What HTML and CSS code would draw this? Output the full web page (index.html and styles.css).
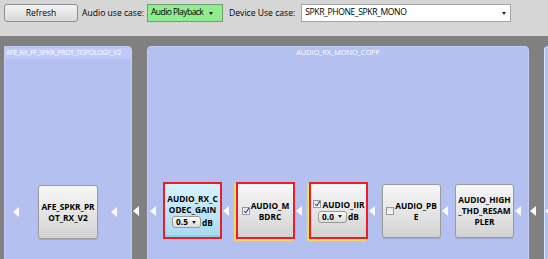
FILE: index.html
```html
<!DOCTYPE html>
<html>
  <head>
    <meta charset="UTF-8" />
    <title>Topology viewer</title>
    <link rel="stylesheet" href="styles.css">
  </head>
  <body>
    <div class="toolbar">
      <button class="btn">Refresh</button>
      <span class="lbl">Audio use case:</span>
      <div class="combo combo-green">Audio Playback<span class="caret"></span></div>
      <span class="lbl lbl-device">Device Use case:</span>
      <div class="combo combo-wide">SPKR_PHONE_SPKR_MONO<span class="caret"></span></div>
    </div>

    <div class="canvas">
      <div class="panel panel-afe">
        <div class="panel-title title-afe">AFE_RX_FF_SPKR_PROT_TOPOLOGY_V2</div>
        <div class="chain">
          <span class="arrow arrow-afe-in"></span>
          <div class="module module-afe">
            <div class="name">AFE_SPKR_PR<br />OT_RX_V2</div>
          </div>
          <span class="arrow arrow-afe-out"></span>
        </div>
      </div>

      <div class="link"><span class="arrow"></span></div>

      <div class="panel panel-copp">
        <div class="panel-title">AUDIO_RX_MONO_COPP</div>
        <div class="chain chain-copp">
          <span class="arrow"></span>

          <div class="module module-gain selected">
            <div class="stack">
              <div class="name">AUDIO_RX_C<br />ODEC_GAIN</div>
              <div class="value">
                <span class="mini-combo">0.5<span class="caret"></span></span>dB
              </div>
            </div>
          </div>
          <span class="arrow"></span>

          <div class="module selected glow">
            <span class="check checked"></span>
            <div class="name">AUDIO_M<br />BDRC</div>
          </div>
          <span class="arrow"></span>

          <div class="module selected glow">
            <div class="stack">
              <div class="row"><span class="check checked"></span><span class="name">AUDIO_IIR</span></div>
              <div class="value">
                <span class="mini-combo">0.0<span class="caret"></span></span>dB
              </div>
            </div>
          </div>
          <span class="arrow"></span>

          <div class="module">
            <span class="check"></span>
            <div class="name">AUDIO_PB<br />E</div>
          </div>
          <span class="arrow"></span>

          <div class="module">
            <div class="name">AUDIO_HIGH<br />_THD_RESAM<br />PLER</div>
          </div>
          <span class="arrow"></span>
        </div>
      </div>

      <div class="link"><span class="arrow"></span></div>

      <div class="panel panel-next">
        <div class="panel-title"></div>
        <div class="chain chain-next"><span class="arrow"></span></div>
      </div>
    </div>
  </body>
</html>
```

FILE: styles.css
```css
body {
  margin: 0;
  width: 548px;
  height: 259px;
  overflow: hidden;
  background: #808080;
  font-family: "Open Sans", "Noto Sans", sans-serif;
  color: #000;
}

/* top bar */
.toolbar {
  display: flex;
  align-items: center;
  height: 36px;
  box-sizing: border-box;
  padding: 0 4px 10px 4px;
  background: #d6d6d6;
  font-size: 8.6px;
}
.btn {
  width: 74px;
  height: 18px;
  margin: 0;
  padding: 0;
  border: 1px solid #8f8f8f;
  border-radius: 3px;
  background: linear-gradient(#f4f4f4, #e6e6e6 50%, #d8d8d8);
  font: inherit;
  color: #000;
}
.lbl {
  margin-left: 4px;
}
.lbl-device {
  margin-left: 6px;
}
.combo {
  position: relative;
  height: 18px;
  box-sizing: border-box;
  margin-left: 3px;
  padding: 0 0 0 3px;
  border: 1px solid #8a8a8a;
  line-height: 15px;
  letter-spacing: -0.4px;
}
.combo-green {
  width: 76px;
  background: #90ec90;
  border-color: #6fa06f;
  letter-spacing: -0.6px;
}
.combo-wide {
  width: 210px;
  margin-left: 6px;
  background: #fff;
  border-color: #a4a4a4;
}
.combo .caret {
  position: absolute;
  top: 7px;
  right: 9px;
}
.combo-wide .caret {
  right: 4px;
}
.caret {
  display: inline-block;
  width: 0;
  height: 0;
  border-top: 3px solid #222;
  border-left: 2.5px solid transparent;
  border-right: 2.5px solid transparent;
}

/* drawing area */
.canvas {
  display: flex;
  align-items: flex-start;
  height: 223px;
  box-sizing: border-box;
  padding: 10px 0 0 4px;
  overflow: hidden;
}
.panel {
  flex: none;
  height: 240px;
  box-sizing: border-box;
  background: #b3c0f0;
  border: 1px solid #c3cdf6;
  border-radius: 4px 4px 0 0;
}
.panel-afe {
  width: 128px;
  border-radius: 0 4px 0 0;
}
.panel-copp {
  width: 382px;
}
.panel-next {
  width: 40px;
  border-left-color: #dfe5fc;
}
.panel-title {
  height: 11px;
  font-size: 7.3px;
  line-height: 10px;
  color: #fff;
  text-align: center;
  white-space: nowrap;
}
.title-afe {
  margin: 1px 0 0 0;
  padding-left: 1px;
  text-align: left;
  background: #c0cafa;
  font-size: 7px;
  letter-spacing: -0.35px;
}
.chain {
  display: flex;
  align-items: center;
  height: 57px;
  margin-top: 124px;
}
.chain-copp {
  padding-left: 2px;
}
.chain-copp .module {
  margin-left: 7px;
}
.chain-copp .module + .arrow {
  margin-left: 1px;
}
.chain-next {
  padding-left: 0;
}
.arrow {
  flex: none;
  width: 0;
  height: 0;
  border-right: 6px solid #fbfbff;
  border-top: 5px solid transparent;
  border-bottom: 5px solid transparent;
}
.arrow-afe-in {
  margin-left: 8px;
}
.module-afe {
  margin-left: 19px;
}
.arrow-afe-out {
  margin-left: 13px;
}
.link {
  flex: none;
  display: flex;
  align-items: center;
  width: 15px;
  height: 57px;
  padding-top: 136px;
}
.link .arrow {
  margin-left: 1px;
}

/* processing blocks */
.module {
  flex: none;
  display: flex;
  align-items: center;
  justify-content: center;
  width: 59px;
  height: 54px;
  box-sizing: border-box;
  border: 1px solid #9c9c9c;
  border-radius: 3px;
  background: linear-gradient(#f7f7f7, #e4e4e4 55%, #d2d2d2);
  box-shadow: 0 1px 1px rgba(80, 90, 140, 0.25);
  font-size: 8.3px;
  font-weight: bold;
  line-height: 11px;
  text-align: center;
}
.module-afe {
  width: 60px;
}
.module.selected {
  height: 57px;
  border: 2px solid #ee1d23;
  border-radius: 0;
}
.module.glow {
  box-shadow: -2px 2px 1px #e4de66;
}
.module-gain {
  background: linear-gradient(#d8f2fd, #bfe7f8 50%, #a6dbf1);
  box-shadow: inset 0 -2px 0 #8fd0ef;
}
.stack {
  display: flex;
  flex-direction: column;
  align-items: center;
}
.row {
  display: flex;
  align-items: center;
}
.value {
  display: flex;
  align-items: center;
  margin-top: 1px;
}
.mini-combo {
  display: flex;
  align-items: center;
  justify-content: space-between;
  width: 29px;
  height: 12px;
  box-sizing: border-box;
  margin-right: 1px;
  padding: 0 4px 0 3px;
  border: 1px solid #9a9a9a;
  border-radius: 3px;
  background: linear-gradient(#fafafa, #dcdcdc);
  line-height: 10px;
}
.check {
  flex: none;
  position: relative;
  width: 8px;
  height: 8px;
  box-sizing: border-box;
  margin-right: 1px;
  border: 1px solid #9a9a9a;
  background: linear-gradient(#e4e4e4, #fafafa);
}
.check.checked::after {
  content: "";
  position: absolute;
  left: 2px;
  top: -1px;
  width: 2px;
  height: 5px;
  border-right: 1.3px solid #2b3c9c;
  border-bottom: 1.3px solid #2b3c9c;
  transform: rotate(35deg);
}
.row .check {
  margin-right: 2px;
}
```
